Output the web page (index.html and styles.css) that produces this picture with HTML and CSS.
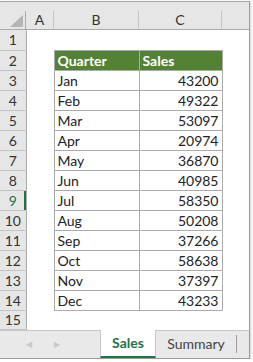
FILE: index.html
```html
<!DOCTYPE html>
<html lang="en">
<head>
    <meta charset="UTF-8">
    <meta name="viewport" content="width=device-width, initial-scale=1.0">
    <title>Sales</title>
    <link rel="stylesheet" href="styles.css">
</head>
<body>
    <div class="window">
        <table class="sheet">
            <colgroup>
                <col class="c-row">
                <col class="c-a">
                <col class="c-b">
                <col class="c-c">
                <col class="c-rest">
            </colgroup>
            <thead>
                <tr>
                    <th class="corner"><div class="col-hd"><span class="tri"></span></div></th>
                    <th><div class="col-hd">A</div></th>
                    <th><div class="col-hd">B</div></th>
                    <th><div class="col-hd">C</div></th>
                    <th><div class="col-hd last"></div></th>
                </tr>
            </thead>
            <tbody>
                <tr><th>1</th><td></td><td></td><td></td><td></td></tr>
                <tr><th>2</th><td></td><td class="d hd">Quarter</td><td class="d hd">Sales</td><td></td></tr>
                <tr><th>3</th><td></td><td class="d">Jan</td><td class="d num">43200</td><td></td></tr>
                <tr><th>4</th><td></td><td class="d">Feb</td><td class="d num">49322</td><td></td></tr>
                <tr><th>5</th><td></td><td class="d">Mar</td><td class="d num">53097</td><td></td></tr>
                <tr><th>6</th><td></td><td class="d">Apr</td><td class="d num">20974</td><td></td></tr>
                <tr><th>7</th><td></td><td class="d">May</td><td class="d num">36870</td><td></td></tr>
                <tr><th>8</th><td></td><td class="d">Jun</td><td class="d num">40985</td><td></td></tr>
                <tr><th class="sel">9</th><td></td><td class="d">Jul</td><td class="d num">58350</td><td></td></tr>
                <tr><th>10</th><td></td><td class="d">Aug</td><td class="d num">50208</td><td></td></tr>
                <tr><th>11</th><td></td><td class="d">Sep</td><td class="d num">37266</td><td></td></tr>
                <tr><th>12</th><td></td><td class="d">Oct</td><td class="d num">58638</td><td></td></tr>
                <tr><th>13</th><td></td><td class="d">Nov</td><td class="d num">37397</td><td></td></tr>
                <tr><th>14</th><td></td><td class="d">Dec</td><td class="d num">43233</td><td></td></tr>
                <tr class="short"><th>15</th><td></td><td></td><td></td><td></td></tr>
            </tbody>
        </table>

        <div class="tabbar">
            <div class="nav">
                <span class="arrow">&#9664;</span>
                <span class="arrow">&#9654;</span>
            </div>
            <div class="tab active">Sales</div>
            <div class="tab">Summary</div>
            <div class="tab-sep"></div>
        </div>
    </div>
</body>
</html>
```

FILE: styles.css
```css
:root {
    --hd-bg: #e6e6e6;
    --hd-line: #c4c4c4;
    --grid-line: #ababab;
    --green: #548235;
    --excel-green: #217346;
}

body {
    margin: 0;
    padding-top: 1px;
    background: #fff;
    font-family: Lato, 'Liberation Sans', sans-serif;
    font-size: 14px;
    color: #222;
}

.window {
    width: 249px;
    border-top: 1px solid #a6a6a6;
    border-right: 1px solid #9a9a9a;
    border-bottom: 1px solid #9a9a9a;
    box-shadow: 1px 1px 3px rgba(0, 0, 0, 0.18);
    background: #fff;
}

.sheet {
    width: 249px;
    border-collapse: collapse;
    table-layout: fixed;
}

.c-row { width: 26px; }
.c-a { width: 28px; }
.c-b { width: 85px; }
.c-c { width: 83px; }

.sheet thead th {
    height: 28px;
    padding: 0;
    background: var(--hd-bg);
    vertical-align: bottom;
    font-weight: normal;
    color: #333;
}

.col-hd {
    height: 18px;
    line-height: 18px;
    text-align: center;
    border-right: 1px solid var(--hd-line);
    border-bottom: 1px solid var(--grid-line);
}

.col-hd.last {
    border-right: none;
}

.corner .col-hd {
    position: relative;
    border-right-color: var(--grid-line);
}

.tri {
    position: absolute;
    right: 2px;
    bottom: 2px;
    width: 0;
    height: 0;
    border-left: 13px solid transparent;
    border-bottom: 12px solid #b5b5b5;
}

.sheet tbody tr {
    height: 20px;
}

.sheet tbody tr.short {
    height: 19px;
}

.sheet tbody th {
    padding: 0;
    background: var(--hd-bg);
    border-right: 1px solid var(--grid-line);
    border-bottom: 1px solid var(--hd-line);
    font-weight: normal;
    color: #333;
    text-align: center;
}

.sheet tbody th.sel {
    color: var(--excel-green);
    box-shadow: inset -2px 0 0 var(--excel-green);
}

.sheet td {
    padding: 0 3px;
    white-space: nowrap;
    overflow: hidden;
}

.sheet td.d {
    border: 1px solid var(--grid-line);
}

.sheet td.hd {
    background: var(--green);
    color: #fff;
    font-weight: bold;
}

.sheet td.num {
    text-align: right;
}

.tabbar {
    display: flex;
    align-items: stretch;
    height: 27px;
    border-top: 1px solid #c6c6c6;
    background: #e9e9e9;
}

.nav {
    width: 100px;
    box-sizing: border-box;
    padding-left: 26px;
    display: flex;
    align-items: center;
    gap: 22px;
    font-size: 8px;
    color: #c8c8c8;
}

.tab {
    display: flex;
    align-items: center;
    justify-content: center;
    padding: 0 0 2px;
    color: #444;
}

.tab.active {
    width: 54px;
    margin-top: -1px;
    background: #fff;
    border-left: 1px solid #c6c6c6;
    border-right: 1px solid #c6c6c6;
    border-bottom: 2px solid var(--excel-green);
    color: var(--excel-green);
    font-weight: bold;
    padding-bottom: 0;
}

.tab:not(.active) {
    width: 80px;
}

.tab-sep {
    width: 1px;
    margin: 4px 0 5px;
    background: #a0a0a0;
}
```
